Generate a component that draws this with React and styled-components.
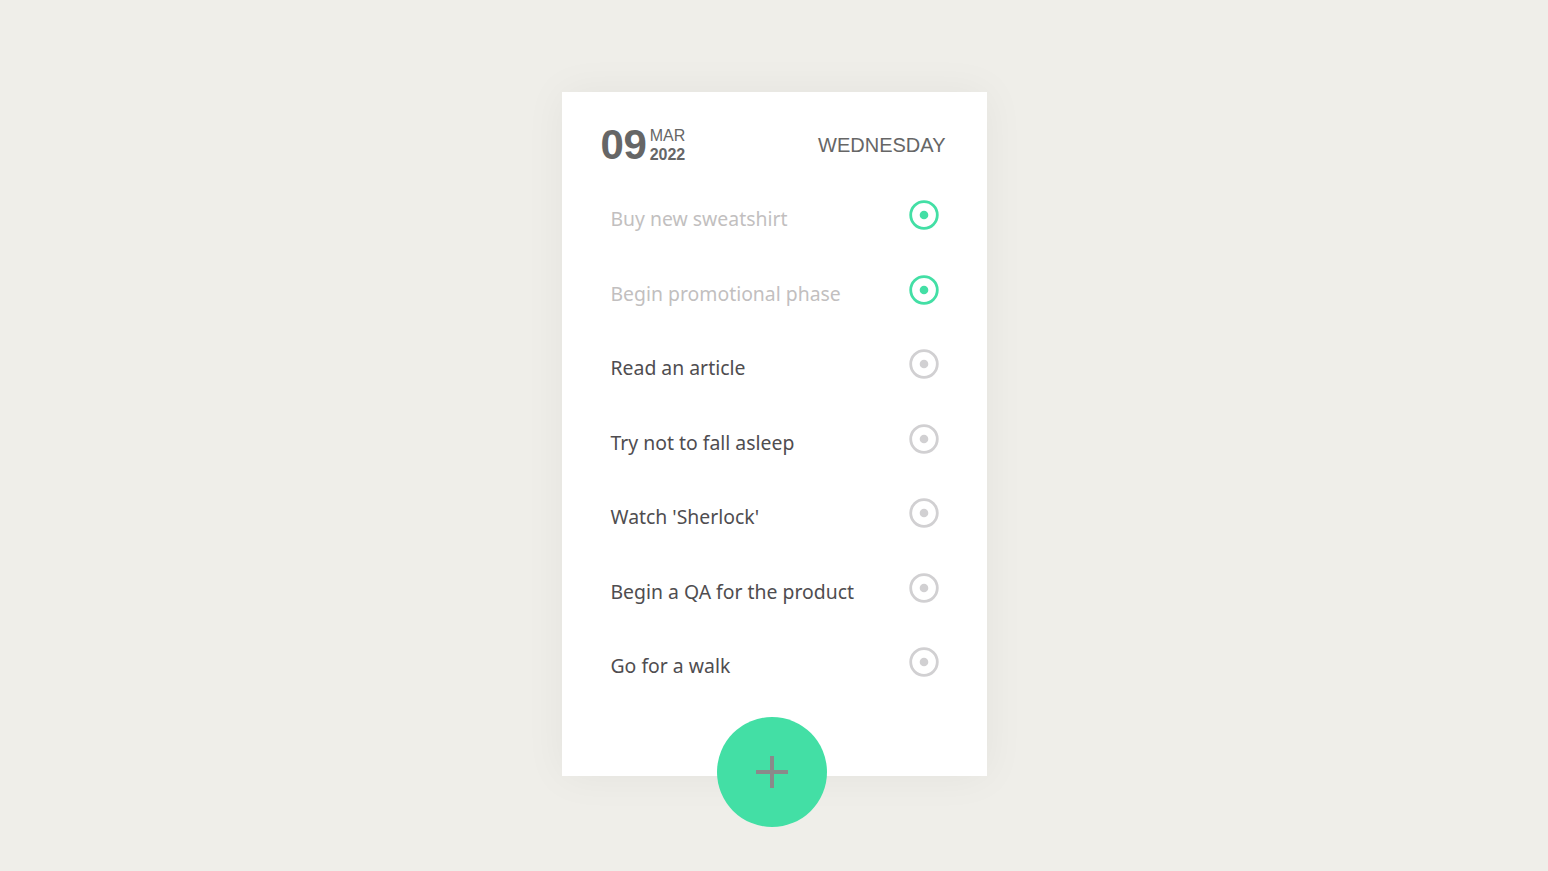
import React from "react";
import styled, {createGlobalStyle} from "styled-components";

const GlobalStyle = createGlobalStyle`
  html, body {
    margin: 0;
    padding: 0;
    background: #efeee9;
  }
  body {
    font-family: "Liberation Sans", Arial, sans-serif;
  }
`;

const Page = styled.div`
  display: flex;
  justify-content: center;
  padding-top: 92px;
  min-height: 871px;
  box-sizing: border-box;
`;

const Card = styled.div`
  position: relative;
  width: 425px;
  height: 684px;
  background: #fff;
  box-shadow: 0 0 40px rgba(0, 0, 0, 0.05);
  box-sizing: border-box;
`;

const Header = styled.div`
  display: flex;
  justify-content: space-between;
  align-items: center;
  height: 86px;
  padding: 20px 41px 0 39px;
  box-sizing: border-box;
  color: #666;
`;

const DateBox = styled.div`
  display: flex;
  align-items: center;
`;

const Day = styled.span`
  font-size: 42px;
  font-weight: 700;
  line-height: 1;
  letter-spacing: -0.3px;
`;

const MonthYear = styled.div`
  display: flex;
  flex-direction: column;
  margin-left: 3px;
  line-height: 19px;
  font-size: 16px;
`;

const Year = styled.span`
  font-weight: 700;
`;

const Weekday = styled.span`
  font-size: 20px;
`;

const List = styled.div`
  display: flex;
  flex-direction: column;
`;

const Row = styled.div`
  display: flex;
  align-items: center;
  justify-content: space-between;
  height: 74.5px;
  padding: 0 48px 0 49px;
`;

const Label = styled.span`
  font-family: "Noto Sans", "Open Sans", sans-serif;
  font-size: 19.4px;
  margin-top: 7px;
  color: ${({done}) => (done ? "#c2bfbf" : "#4f4d50")};
`;

const Check = styled.svg`
  width: 30px;
  height: 30px;
  flex-shrink: 0;
`;

const Fab = styled.button`
  position: absolute;
  left: calc(50% - 2.5px);
  bottom: -51px;
  transform: translateX(-50%);
  width: 110px;
  height: 110px;
  border-radius: 50%;
  border: none;
  background: #43dfa5;
  display: flex;
  align-items: center;
  justify-content: center;
  cursor: pointer;
  padding: 0;
`;

const tasks = [
    {title: "Buy new sweatshirt", done: true},
    {title: "Begin promotional phase", done: true},
    {title: "Read an article", done: false},
    {title: "Try not to fall asleep", done: false},
    {title: "Watch 'Sherlock'", done: false},
    {title: "Begin a QA for the product", done: false},
    {title: "Go for a walk", done: false},
];

const CheckIcon = ({done}) => {
    const color = done ? "#43dfa5" : "#d1d0d2";
    return (
        <Check viewBox="0 0 30 30">
            <circle cx="15" cy="15" r="13.3" fill="none" stroke={color} strokeWidth="2.8"/>
            <circle cx="15" cy="15" r="4.3" fill={color}/>
        </Check>
    );
};

export default function App() {
    return (
        <>
            <GlobalStyle/>
            <Page>
                <Card>
                    <Header>
                        <DateBox>
                            <Day>09</Day>
                            <MonthYear>
                                <span>MAR</span>
                                <Year>2022</Year>
                            </MonthYear>
                        </DateBox>
                        <Weekday>WEDNESDAY</Weekday>
                    </Header>
                    <List>
                        {tasks.map((task, index) => (
                            <Row key={index}>
                                <Label done={task.done}>{task.title}</Label>
                                <CheckIcon done={task.done}/>
                            </Row>
                        ))}
                    </List>
                    <Fab>
                        <svg width="32" height="32" viewBox="0 0 32 32">
                            <rect x="14" y="0" width="4" height="32" fill="#8a8a8a"/>
                            <rect x="0" y="14" width="32" height="4" fill="#8a8a8a"/>
                        </svg>
                    </Fab>
                </Card>
            </Page>
        </>
    );
}
